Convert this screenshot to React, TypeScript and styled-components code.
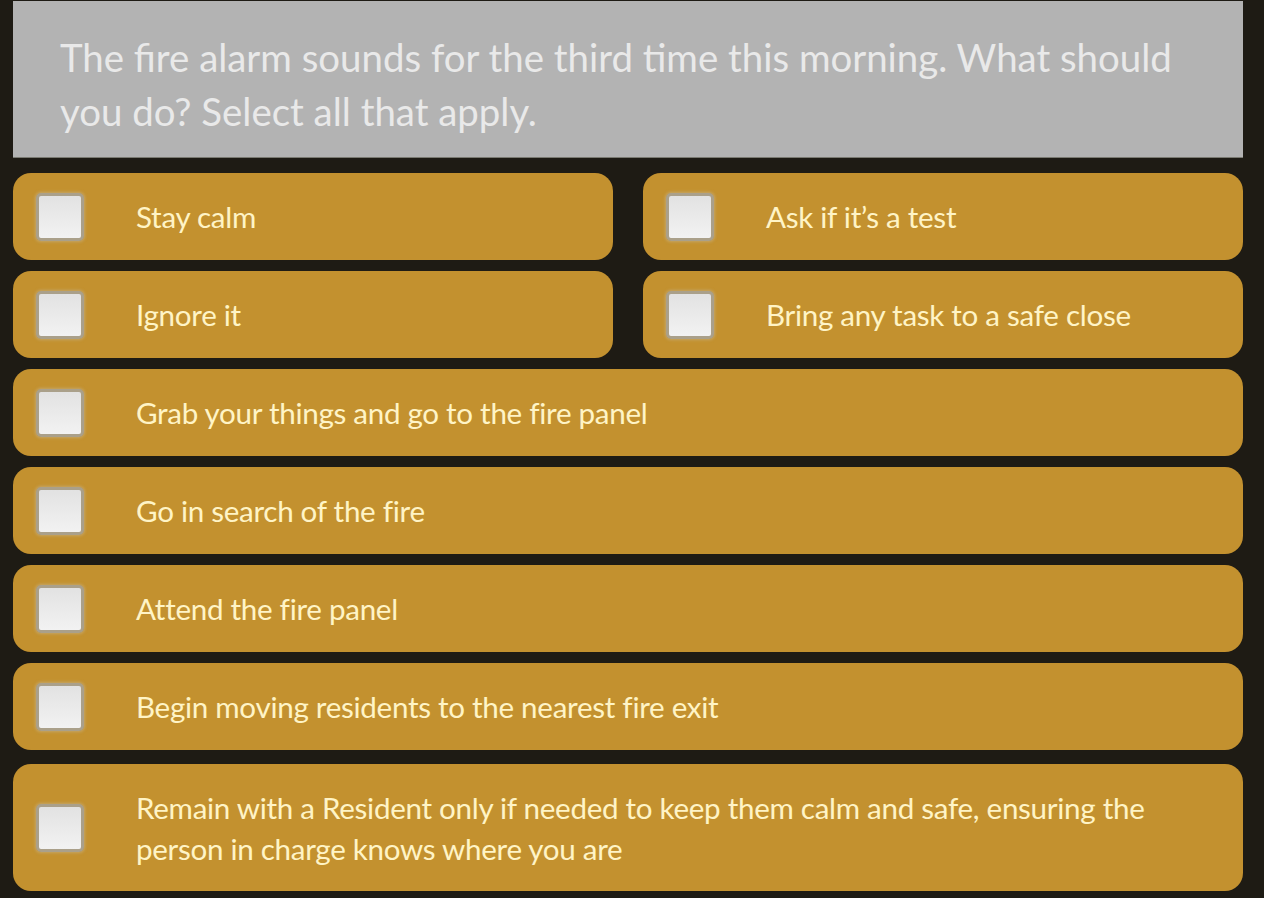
import styled, { createGlobalStyle } from "styled-components";

const GlobalStyle = createGlobalStyle`
    html, body {
        margin: 0;
        padding: 0;
        background: #1e1b14;
    }
    body {
        font-family: Lato, "Noto Sans", sans-serif;
    }
`;

type Option = { label: string; wide?: boolean };

const options: Option[] = [
    { label: "Stay calm" },
    { label: "Ask if it\u2019s a test" },
    { label: "Ignore it" },
    { label: "Bring any task to a safe close" },
    { label: "Grab your things and go to the fire panel", wide: true },
    { label: "Go in search of the fire", wide: true },
    { label: "Attend the fire panel", wide: true },
    { label: "Begin moving residents to the nearest fire exit", wide: true },
    {
        label: "Remain with a Resident only if needed to keep them calm and safe, ensuring the person in charge knows where you are",
        wide: true,
    },
];

export default function App() {
    return (
        <>
            <GlobalStyle />
            <Page>
                <Question>
                    The fire alarm sounds for the third time this morning. What should you do? Select all that apply.
                </Question>
                <OptionGrid>
                    {options.map((o) => (
                        <Card key={o.label} $wide={o.wide} $tall={o.label.length > 60}>
                            <Checkbox />
                            <Label>{o.label}</Label>
                        </Card>
                    ))}
                </OptionGrid>
            </Page>
        </>
    );
}

const Page = styled.div`
    padding: 1px 21px 8px 13px;
    width: 1264px;
    box-sizing: border-box;
`;

const Question = styled.div`
    background: #b3b3b3;
    border-bottom: 1px solid #7a7a72;
    padding: 29px 60px 20px 47px;
    font-size: 38.4px;
    line-height: 54px;
    color: #e9e9e9;
    height: 157px;
    box-sizing: border-box;
`;

const OptionGrid = styled.div`
    margin-top: 15px;
    display: grid;
    grid-template-columns: 1fr 1fr;
    column-gap: 30px;
    row-gap: 11px;
`;

const Card = styled.label<{ $wide?: boolean; $tall?: boolean }>`
    grid-column: ${(p) => (p.$wide ? "1 / -1" : "auto")};
    display: flex;
    align-items: center;
    height: ${(p) => (p.$tall ? "127px" : "87px")};
    margin-top: ${(p) => (p.$tall ? "3px" : "0")};
    padding-left: 23px;
    background: #c3912f;
    border-radius: 18px;
    box-sizing: border-box;
    cursor: pointer;
`;

const Checkbox = styled.span`
    flex: none;
    width: 42px;
    height: 42px;
    border: 3px solid #aaa08a;
    border-radius: 5px;
    background: linear-gradient(#e2e2e2, #f2f2f2);
    box-shadow: 0 0 3px 1px rgba(200, 180, 140, 0.6);
`;

const Label = styled.span`
    margin-left: 52px;
    margin-right: 40px;
    font-size: 29.6px;
    line-height: 41px;
    color: #fff4c6;
    letter-spacing: -0.3px;
`;
